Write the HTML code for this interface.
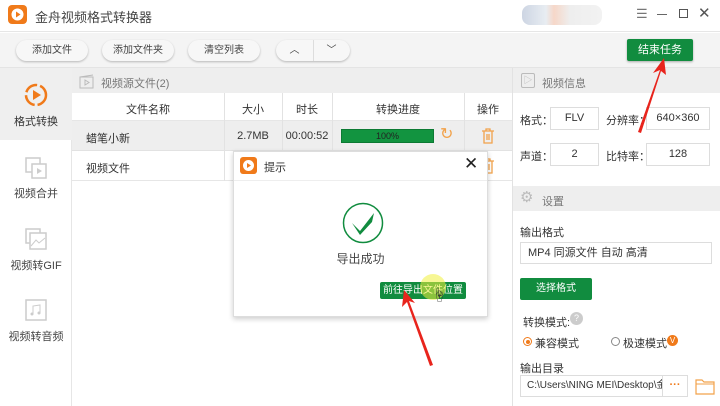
<!DOCTYPE html><html><head><meta charset="utf-8"><style>
*{box-sizing:border-box;margin:0;padding:0}
body{width:720px;height:406px;overflow:hidden;background:#fff;font-family:"Liberation Sans","Noto Sans CJK SC",sans-serif;font-size:11px;color:#333;position:relative}
.a{position:absolute}
.btn{position:absolute;background:#f7f7f7;border-radius:11px;box-shadow:0 1px 2px rgba(0,0,0,.25);text-align:center;line-height:21px;font-size:10px;color:#444}
.g{background:#118c3f;color:#fff;text-align:center;position:absolute;border-radius:2px}
.box{position:absolute;border:1px solid #ddd;background:#fff;text-align:center;font-size:11px}
.c{text-align:center}
</style></head><body>
<div class="a" style="left:0;top:0;width:720px;height:32px;border-bottom:1px solid #e6e6e6"></div>
<div class="a" style="left:8px;top:5px;width:19px;height:19px;background:#f07a1a;border-radius:4px"><svg width="19" height="19"><circle cx="9.5" cy="9.5" r="6" fill="#fff"/><path d="M8 6.5 L12.5 9.5 L8 12.5Z" fill="#f07a1a"/></svg></div>
<div class="a" style="left:35px;top:7px;font-size:13px;color:#444">金舟视频格式转换器</div>
<div class="a" style="left:522px;top:5px;width:80px;height:20px;border-radius:8px;background:linear-gradient(90deg,#cdd5e3,#e8edf2 30%,#f6d7c8 40%,#eee 60%,#f2f2f2)"></div>
<div class="a" style="left:636px;top:6px;font-size:13px;color:#777">☰</div>
<div class="a" style="left:657px;top:14px;width:10px;height:1px;background:#666"></div>
<div class="a" style="left:679px;top:9px;width:9px;height:9px;border:1.5px solid #555"></div>
<div class="a" style="left:698px;top:4px;font-size:15px;color:#555">✕</div>
<div class="a" style="left:0;top:33px;width:720px;height:35px;background:#f4f4f4;border-bottom:1px solid #e4e4e4"></div>
<div class="btn" style="left:16px;top:40px;width:72px">添加文件</div>
<div class="btn" style="left:102px;top:40px;width:72px">添加文件夹</div>
<div class="btn" style="left:188px;top:40px;width:72px">清空列表</div>
<div class="btn" style="left:276px;top:40px;width:74px"><span style="display:inline-block;width:37px;border-right:1px solid #ddd">︿</span><span style="display:inline-block;width:36px">﹀</span></div>
<div class="g" style="left:627px;top:39px;width:66px;height:22px;line-height:22px;font-size:11px;box-shadow:0 1px 2px rgba(0,0,0,.3)">结束任务</div>
<div class="a" style="left:0;top:68px;width:72px;height:338px;background:#fff;border-right:1px solid #e6e6e6"></div>
<div class="a" style="left:0;top:68px;width:72px;height:72px;background:#efefef"></div>
<svg class="a" style="left:24px;top:83px" width="24" height="24"><circle cx="12" cy="12" r="10" fill="none" stroke="#f07a1a" stroke-width="2.5" stroke-dasharray="14 3"/><path d="M9 7 L17 12 L9 17Z" fill="#f07a1a"/></svg>
<div class="a c" style="left:0;top:113px;width:72px;font-size:11px;color:#333">格式转换</div>
<svg class="a" style="left:25px;top:157px" width="22" height="22"><rect x="1" y="1" width="14" height="14" fill="none" stroke="#ccc" stroke-width="1.5"/><rect x="7" y="7" width="14" height="14" fill="#fff" stroke="#ccc" stroke-width="1.5"/><path d="M12 11 L17 14 L12 17Z" fill="#ccc"/></svg>
<div class="a c" style="left:0;top:185px;width:72px;color:#444">视频合并</div>
<svg class="a" style="left:25px;top:228px" width="22" height="22"><rect x="1" y="1" width="14" height="14" fill="none" stroke="#ccc" stroke-width="1.5"/><rect x="5" y="5" width="16" height="16" fill="#fff" stroke="#ccc" stroke-width="1.5"/><path d="M6 18 L11 12 L14 15 L20 10" fill="none" stroke="#ccc"/></svg>
<div class="a c" style="left:0;top:257px;width:72px;color:#444">视频转GIF</div>
<svg class="a" style="left:25px;top:299px" width="22" height="22"><rect x="1" y="1" width="20" height="20" fill="none" stroke="#ccc" stroke-width="1.5"/><path d="M8 15 V7 L15 6 V14" fill="none" stroke="#ccc"/><circle cx="7" cy="15" r="1.5" fill="#ccc"/><circle cx="14" cy="14" r="1.5" fill="#ccc"/></svg>
<div class="a c" style="left:0;top:328px;width:72px;color:#444">视频转音频</div>
<div class="a" style="left:72px;top:68px;width:440px;height:25px;background:#eeeeee"></div>
<svg class="a" style="left:79px;top:74px" width="15" height="15"><rect x="1" y="3" width="13" height="11" fill="none" stroke="#bbb"/><path d="M1 3 L14 1" stroke="#bbb"/><path d="M6 6 L10 8.5 L6 11Z" fill="none" stroke="#bbb"/></svg>
<div class="a" style="left:101px;top:75px;color:#777">视频源文件(2)</div>
<div class="a" style="left:72px;top:93px;width:440px;height:28px;border-bottom:1px solid #e6e6e6"></div>
<div class="a" style="left:72px;top:121px;width:440px;height:30px;background:#eeeeee;border-bottom:1px solid #e2e2e2"></div>
<div class="a" style="left:72px;top:151px;width:440px;height:30px;border-bottom:1px solid #e6e6e6"></div>
<div class="a" style="left:224px;top:93px;width:1px;height:88px;background:#e2e2e2"></div>
<div class="a" style="left:282px;top:93px;width:1px;height:88px;background:#e2e2e2"></div>
<div class="a" style="left:332px;top:93px;width:1px;height:88px;background:#e2e2e2"></div>
<div class="a" style="left:464px;top:93px;width:1px;height:88px;background:#e2e2e2"></div>
<div class="a c" style="left:72px;top:101px;width:152px">文件名称</div>
<div class="a c" style="left:224px;top:101px;width:58px">大小</div>
<div class="a c" style="left:282px;top:101px;width:50px">时长</div>
<div class="a c" style="left:332px;top:101px;width:132px">转换进度</div>
<div class="a c" style="left:464px;top:101px;width:48px">操作</div>
<div class="a" style="left:86px;top:130px">蜡笔小新</div>
<div class="a c" style="left:224px;top:130px;width:58px">2.7MB</div>
<div class="a c" style="left:282px;top:130px;width:50px">00:00:52</div>
<div class="a c" style="left:341px;top:129px;width:93px;height:14px;background:#129440;border:1px solid #0c7a33;font-size:9px;line-height:12px;color:#222">100%</div>
<div class="a" style="left:440px;top:124px;font-size:16px;color:#f2a24a">↻</div>
<svg class="a" style="left:481px;top:128px" width="14" height="16"><path d="M1 3H13M5 3V1H9V3M3 3V15H11V3M6 6V12M8 6V12" fill="none" stroke="#f2a24a" stroke-width="1.3"/></svg>
<svg class="a" style="left:481px;top:158px" width="14" height="16"><path d="M1 3H13M5 3V1H9V3M3 3V15H11V3M6 6V12M8 6V12" fill="none" stroke="#f2a24a" stroke-width="1.3"/></svg>
<div class="a" style="left:86px;top:160px">视频文件</div>
<div class="a" style="left:512px;top:68px;width:208px;height:338px;border-left:1px solid #e2e2e2"></div>
<div class="a" style="left:513px;top:68px;width:207px;height:25px;background:#eeeeee"></div>
<div class="a" style="left:521px;top:73px;width:14px;height:15px;border:1px solid #bbb;border-radius:2px;font-size:9px;color:#bbb;text-align:center;line-height:13px">▷</div>
<div class="a" style="left:542px;top:75px;color:#777">视频信息</div>
<div class="a" style="left:520px;top:112px">格式：</div><div class="box" style="left:550px;top:107px;width:49px;height:23px;line-height:21px">FLV</div>
<div class="a" style="left:606px;top:112px">分辨率：</div><div class="box" style="left:646px;top:107px;width:64px;height:23px;line-height:21px">640×360</div>
<div class="a" style="left:520px;top:148px">声道：</div><div class="box" style="left:550px;top:143px;width:49px;height:23px;line-height:21px">2</div>
<div class="a" style="left:606px;top:148px">比特率：</div><div class="box" style="left:646px;top:143px;width:64px;height:23px;line-height:21px">128</div>
<div class="a" style="left:513px;top:186px;width:207px;height:25px;background:#eeeeee"></div>
<div class="a" style="left:520px;top:188px;font-size:15px;color:#bbb">⚙</div>
<div class="a" style="left:542px;top:193px;color:#777">设置</div>
<div class="a" style="left:520px;top:224px">输出格式</div>
<div class="box" style="left:520px;top:242px;width:192px;height:22px;line-height:20px;text-align:left;padding-left:7px">MP4 同源文件 自动 高清</div>
<div class="g" style="left:520px;top:278px;width:72px;height:22px;line-height:22px;font-size:10px">选择格式</div>
<div class="a" style="left:523px;top:314px">转换模式:</div>
<div class="a" style="left:570px;top:312px;width:13px;height:13px;border-radius:50%;background:#ccc;color:#fff;font-size:9px;text-align:center;line-height:13px">?</div>
<div class="a" style="left:523px;top:337px;width:9px;height:9px;border:1px solid #f07a1a;border-radius:50%"><div style="margin:1.5px;width:4px;height:4px;border-radius:50%;background:#f07a1a"></div></div>
<div class="a" style="left:535px;top:335px">兼容模式</div>
<div class="a" style="left:611px;top:337px;width:9px;height:9px;border:1px solid #888;border-radius:50%"></div>
<div class="a" style="left:623px;top:335px">极速模式</div>
<div class="a" style="left:667px;top:335px;width:11px;height:11px;border-radius:50%;background:#f07a1a;color:#fff;font-size:8px;text-align:center;line-height:11px">V</div>
<div class="a" style="left:520px;top:360px">输出目录</div>
<div class="box" style="left:520px;top:375px;width:143px;height:22px;line-height:20px;text-align:left;padding-left:6px;font-size:10px;white-space:nowrap;overflow:hidden">C:\Users\NING MEI\Desktop\金</div>
<div class="box" style="left:662px;top:375px;width:26px;height:22px;line-height:18px;color:#f07a1a;font-weight:bold">···</div>
<svg class="a" style="left:695px;top:378px" width="20" height="17"><path d="M1 2H7L9 4H19V16H1Z" fill="#fff" stroke="#f2a24a" stroke-width="1.2"/><path d="M1 6H19" stroke="#f2a24a"/></svg>
<div class="a" style="left:233px;top:151px;width:255px;height:166px;background:#fff;border:1px solid #ddd;box-shadow:0 2px 5px rgba(0,0,0,.2)"></div>
<div class="a" style="left:234px;top:180px;width:253px;height:1px;background:#eee"></div>
<div class="a" style="left:240px;top:157px;width:17px;height:17px;background:#f07a1a;border-radius:3px"><svg width="17" height="17"><circle cx="8.5" cy="8.5" r="5.5" fill="#fff"/><path d="M7 6 L11 8.5 L7 11Z" fill="#f07a1a"/></svg></div>
<div class="a" style="left:264px;top:159px;font-size:11px">提示</div>
<div class="a" style="left:464px;top:154px;font-size:17px;color:#222">✕</div>
<svg class="a" style="left:342px;top:202px" width="42" height="42"><circle cx="21" cy="21" r="19.5" fill="none" stroke="#118c3f" stroke-width="1.5"/><path d="M10 21 L18 29 L32 11 L30 20 L18 33 Z" fill="#118c3f"/></svg>
<div class="a c" style="left:233px;top:250px;width:255px;font-size:12px;color:#444">导出成功</div>
<div class="g" style="left:380px;top:282px;width:86px;height:17px;line-height:17px;font-size:10px">前往导出文件位置</div>
<div class="a" style="left:420px;top:274px;width:26px;height:26px;border-radius:50%;background:rgba(240,240,60,.55)"></div>
<div class="a" style="left:432px;top:285px;font-size:14px;color:#333">☝</div>
<svg class="a" style="left:0;top:0" width="720" height="406"><path d="M638 132 L660 70 L653 73 L664 58 L666 75 L661 71 L641 133Z" fill="#e8241c"/><path d="M430 366 L407 302 L402 307 L404 290 L415 303 L409 301 L433 365Z" fill="#e8241c"/></svg>
</body></html>
